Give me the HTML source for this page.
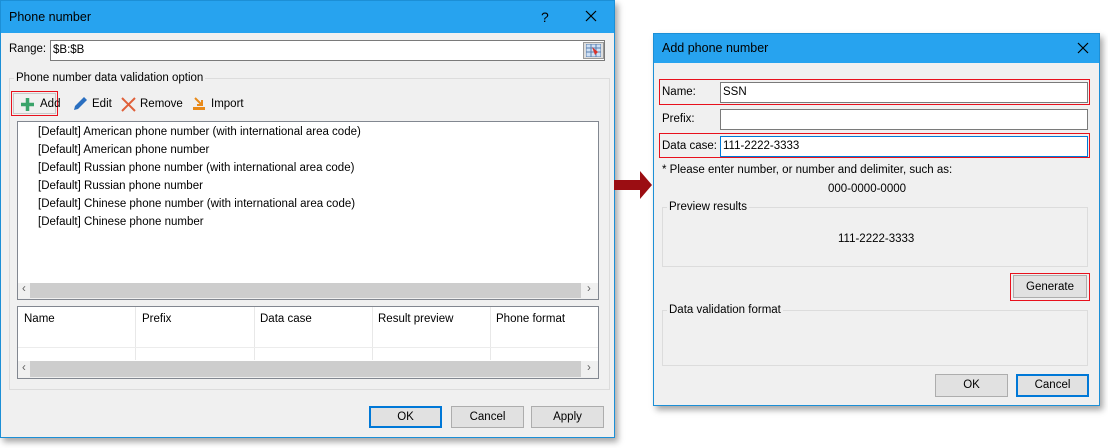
<!DOCTYPE html>
<html><head><style>
*{box-sizing:border-box;margin:0;padding:0}
body{width:1108px;height:448px;background:#fff;position:relative;overflow:hidden;font-family:"Liberation Sans",sans-serif;font-size:11.5px;color:#000}
.a{position:absolute;white-space:nowrap}
.dlg{background:#f0f0f0;border:1px solid #1c8fd6;box-shadow:3px 4px 6px rgba(0,0,0,.35)}
.tb{background:#27a3ef}
.inp{background:#fff;border:1px solid #7a7a7a}
.grp{border:1px solid #dcdcdc}
.lg{background:#f0f0f0;padding:0 2px}
.btn{background:#e1e1e1;border:1px solid #adadad;text-align:center;line-height:20px}
.bb{border:2px solid #0078d7;line-height:18px}
.red{border:1px solid #e8101c}
.sb{background:#cdcdcd}
.hd{border-right:1px solid #e8e8e8}
</style></head><body>
<div class="a dlg" style="left:0;top:0;width:615px;height:438px"></div>
<div class="a tb" style="left:1px;top:1px;width:613px;height:32px"></div>
<div class="a" style="left:9px;top:10px;font-size:12.5px">Phone number</div>
<div class="a" style="left:541px;top:9px;font-size:14px">?</div>
<svg class="a" style="left:585px;top:10px" width="12" height="12"><path d="M1 1L11 11M11 1L1 11" stroke="#000" stroke-width="1.2"/></svg>
<div class="a" style="left:9px;top:43px">Range:</div>
<div class="a inp" style="left:50px;top:40px;width:555px;height:21px"></div>
<div class="a" style="left:53px;top:44px">$B:$B</div>
<div class="a" style="left:583px;top:42px;width:21px;height:17px;background:#ddd;border:1px solid #999"></div>
<svg class="a" style="left:586px;top:44px" width="15" height="13"><rect x="0" y="0" width="15" height="13" fill="#cfe0f5" stroke="#5a7fb0"/><path d="M0 4H15M0 8H15M5 0V13M10 0V13" stroke="#5a7fb0"/><path d="M6 3L12 8L9 11Z" fill="#d9322b"/></svg>
<div class="a grp" style="left:9px;top:78px;width:601px;height:312px"></div>
<div class="a lg" style="left:14px;top:72px">Phone number data validation option</div>
<div class="a" style="left:13px;top:93px;width:43px;height:21px;border:1px solid #c8c8c8"></div>
<div class="a red" style="left:11px;top:91px;width:47px;height:25px"></div>
<svg class="a" style="left:20px;top:97px" width="15" height="15"><path d="M7.5 1V14M1 7.5H14" stroke="#3aa36a" stroke-width="3.5"/></svg>
<div class="a" style="left:40px;top:98px">Add</div>
<svg class="a" style="left:72px;top:96px" width="16" height="16"><path d="M2 14L3 10L12 1L15 4L6 13Z" fill="#2a6fc0"/></svg>
<div class="a" style="left:92px;top:98px">Edit</div>
<svg class="a" style="left:121px;top:97px" width="15" height="15"><path d="M1 1L14 14M14 1L1 14" stroke="#e0603a" stroke-width="2"/></svg>
<div class="a" style="left:140px;top:98px">Remove</div>
<svg class="a" style="left:191px;top:96px" width="16" height="16"><path d="M2 14H14V11H2Z" fill="#e88a1a"/><path d="M4 2L11 9M11 4V9H6" stroke="#e88a1a" stroke-width="2" fill="none"/></svg>
<div class="a" style="left:211px;top:98px">Import</div>
<div class="a inp" style="left:17px;top:121px;width:582px;height:179px;border-color:#828790"></div>
<div class="a" style="left:38px;top:123px;line-height:18px">[Default] American phone number (with international area code)<br>[Default] American phone number<br>[Default] Russian phone number (with international area code)<br>[Default] Russian phone number<br>[Default] Chinese phone number (with international area code)<br>[Default] Chinese phone number</div>
<div class="a sb" style="left:18px;top:283px;width:580px;height:16px;background:#f0f0f0"></div>
<div class="a sb" style="left:30px;top:283px;width:551px;height:15px"></div>
<div class="a" style="left:22px;top:283px;color:#606060">&lsaquo;</div>
<div class="a" style="left:587px;top:283px;color:#606060">&rsaquo;</div>
<div class="a inp" style="left:17px;top:306px;width:582px;height:73px;border-color:#828790"></div>
<div class="a hd" style="left:18px;top:307px;width:118px;height:53px"></div>
<div class="a hd" style="left:136px;top:307px;width:119px;height:53px"></div>
<div class="a hd" style="left:255px;top:307px;width:118px;height:53px"></div>
<div class="a hd" style="left:373px;top:307px;width:118px;height:53px"></div>
<div class="a" style="left:18px;top:347px;width:580px;height:1px;background:#ececec"></div>
<div class="a" style="left:24px;top:313px">Name</div>
<div class="a" style="left:142px;top:313px">Prefix</div>
<div class="a" style="left:260px;top:313px">Data case</div>
<div class="a" style="left:378px;top:313px">Result preview</div>
<div class="a" style="left:496px;top:313px">Phone format</div>
<div class="a" style="left:18px;top:361px;width:580px;height:17px;background:#f0f0f0"></div>
<div class="a sb" style="left:30px;top:361px;width:551px;height:16px"></div>
<div class="a" style="left:22px;top:362px;color:#606060">&lsaquo;</div>
<div class="a" style="left:587px;top:362px;color:#606060">&rsaquo;</div>
<div class="a btn bb" style="left:369px;top:406px;width:73px;height:22px">OK</div>
<div class="a btn" style="left:451px;top:406px;width:73px;height:22px">Cancel</div>
<div class="a btn" style="left:531px;top:406px;width:73px;height:22px">Apply</div>
<svg class="a" style="left:612px;top:168px" width="42" height="34"><path d="M2 12H28V3L40 17L28 31V22H2Z" fill="#9b0d12"/></svg>
<div class="a dlg" style="left:653px;top:33px;width:447px;height:373px"></div>
<div class="a tb" style="left:654px;top:34px;width:445px;height:29px"></div>
<div class="a" style="left:662px;top:41px;font-size:12.5px">Add phone number</div>
<svg class="a" style="left:1077px;top:42px" width="12" height="12"><path d="M1 1L11 11M11 1L1 11" stroke="#000" stroke-width="1.2"/></svg>
<div class="a inp" style="left:720px;top:82px;width:368px;height:21px"></div>
<div class="a red" style="left:659px;top:79px;width:431px;height:26px"></div>
<div class="a" style="left:662px;top:86px">Name:</div>
<div class="a" style="left:723px;top:86px">SSN</div>
<div class="a" style="left:662px;top:113px">Prefix:</div>
<div class="a inp" style="left:720px;top:109px;width:368px;height:21px"></div>
<div class="a inp" style="left:720px;top:136px;width:368px;height:21px;border-color:#0078d7"></div>
<div class="a red" style="left:659px;top:133px;width:431px;height:25px"></div>
<div class="a" style="left:662px;top:140px">Data case:</div>
<div class="a" style="left:723px;top:140px">111-2222-3333</div>
<div class="a" style="left:662px;top:164px">* Please enter number, or number and delimiter, such as:</div>
<div class="a" style="left:828px;top:183px">000-0000-0000</div>
<div class="a grp" style="left:662px;top:207px;width:426px;height:60px"></div>
<div class="a lg" style="left:667px;top:201px">Preview results</div>
<div class="a" style="left:838px;top:233px">111-2222-3333</div>
<div class="a btn" style="left:1013px;top:275px;width:74px;height:23px;line-height:22px">Generate</div>
<div class="a red" style="left:1010px;top:273px;width:80px;height:28px"></div>
<div class="a grp" style="left:662px;top:310px;width:426px;height:56px"></div>
<div class="a lg" style="left:667px;top:304px">Data validation format</div>
<div class="a btn" style="left:935px;top:374px;width:73px;height:23px">OK</div>
<div class="a btn bb" style="left:1016px;top:374px;width:73px;height:23px">Cancel</div>
</body></html>
